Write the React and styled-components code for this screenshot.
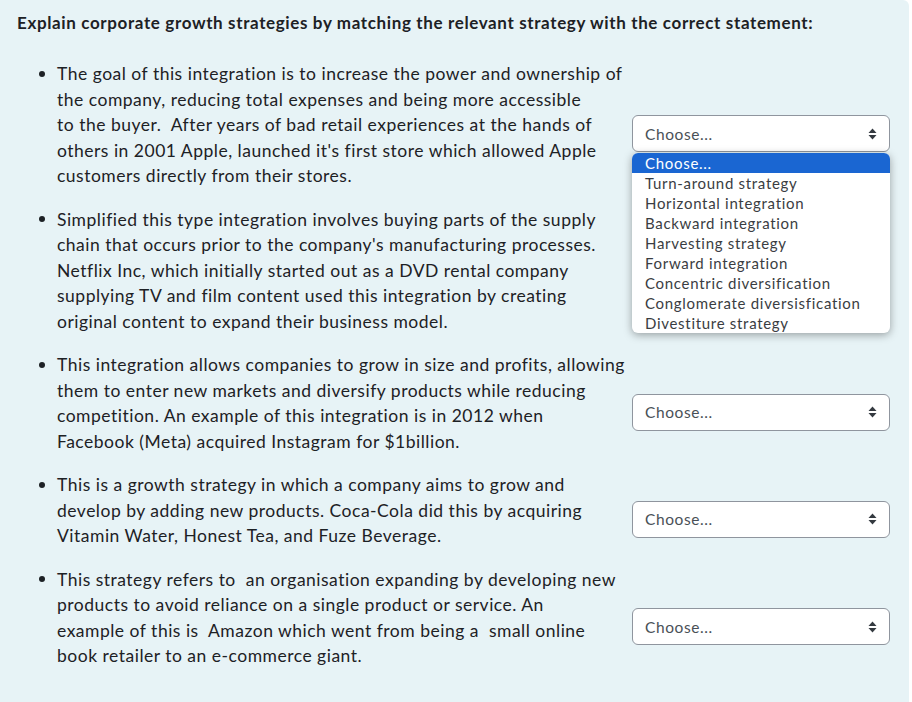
import React from "react"
import styled, { createGlobalStyle } from "styled-components"

const GlobalStyle = createGlobalStyle`
    html, body {
        margin: 0;
        padding: 0;
        background: #ffffff;
    }
    body {
        font-family: "Century Gothic", "Lato", sans-serif;
        color: #1d2125;
    }
`

const Panel = styled.div`
    width: 909px;
    min-height: 702px;
    box-sizing: border-box;
    background: #e7f3f6;
    border-radius: 0 6px 0 0;
    padding: 12px 0 0 17px;
`
const Title = styled.h4`
    margin: 0 0 27px;
    font-size: 17px;
    font-weight: 700;
    line-height: 22px;
    letter-spacing: 0.63px;
    color: #1d2125;
    white-space: nowrap;
`
const List = styled.ul`
    list-style: none;
    margin: 0;
    padding: 0;
`
const Item = styled.li`
    display: flex;
    align-items: center;
`
const Bullet = styled.span`
    align-self: flex-start;
    flex: 0 0 40px;
    height: 25.5px;
    display: flex;
    align-items: center;
    justify-content: flex-end;
    &::after {
        content: "";
        width: 6px;
        height: 6px;
        border-radius: 50%;
        background: #1d2125;
        margin-right: 12px;
    }
`
const Statement = styled.div`
    flex: 0 0 575px;
    padding-bottom: 18px;
    font-size: 17.5px;
    line-height: 25.5px;
    letter-spacing: 0.5px;
    white-space: pre;
`
const SelectWrap = styled.div`
    position: relative;
    width: 258px;
`
const Select = styled.div`
    height: 37px;
    box-sizing: border-box;
    display: flex;
    align-items: center;
    justify-content: space-between;
    padding: 0 12px;
    background: #ffffff;
    border: 1px solid #8f959e;
    border-radius: 6px;
    font-size: 15.5px;
    color: #495057;
    letter-spacing: 0.6px;
`
const Menu = styled.ul`
    position: absolute;
    top: 38px;
    left: 0;
    width: 258px;
    margin: 0;
    padding: 0;
    list-style: none;
    background: #ffffff;
    border-radius: 6px;
    overflow: hidden;
    box-shadow: 0 2px 8px rgba(0, 0, 0, 0.35);
    z-index: 2;
`
const Option = styled.li`
    height: 20px;
    line-height: 20px;
    padding: 0 13px;
    font-size: 15px;
    letter-spacing: 0.7px;
    white-space: nowrap;
    color: ${p => (p.$active ? "#ffffff" : "#3a3d42")};
    background: ${p => (p.$active ? "#1a66d2" : "transparent")};
`

const options = [
    "Choose...",
    "Turn-around strategy",
    "Horizontal integration",
    "Backward integration",
    "Harvesting strategy",
    "Forward integration",
    "Concentric diversification",
    "Conglomerate diversisfication",
    "Divestiture strategy",
]

const statements = [
    [
        "The goal of this integration is to increase the power and ownership of",
        "the company, reducing total expenses and being more accessible",
        "to the buyer.  After years of bad retail experiences at the hands of",
        "others in 2001 Apple, launched it's first store which allowed Apple",
        "customers directly from their stores.",
    ],
    [
        "Simplified this type integration involves buying parts of the supply",
        "chain that occurs prior to the company's manufacturing processes.",
        "Netflix Inc, which initially started out as a DVD rental company",
        "supplying TV and film content used this integration by creating",
        "original content to expand their business model.",
    ],
    [
        "This integration allows companies to grow in size and profits, allowing",
        "them to enter new markets and diversify products while reducing",
        "competition. An example of this integration is in 2012 when",
        "Facebook (Meta) acquired Instagram for $1billion.",
    ],
    [
        "This is a growth strategy in which a company aims to grow and",
        "develop by adding new products. Coca-Cola did this by acquiring",
        "Vitamin Water, Honest Tea, and Fuze Beverage.",
    ],
    [
        "This strategy refers to  an organisation expanding by developing new",
        "products to avoid reliance on a single product or service. An",
        "example of this is  Amazon which went from being a  small online",
        "book retailer to an e-commerce giant.",
    ],
]

const Arrows = () => (
    <svg width="9" height="12" viewBox="0 0 9 12">
        <path d="M4.5 0.5 L8.5 5 L0.5 5 Z" fill="#343a40" />
        <path d="M4.5 11.5 L8.5 7 L0.5 7 Z" fill="#343a40" />
    </svg>
)

export default function App() {
    return (
        <React.Fragment>
            <GlobalStyle />
            <Panel>
                <Title>Explain corporate growth strategies by matching the relevant strategy with the correct statement:</Title>
                <List>
                    {statements.map((lines, i) => (
                        <Item key={i}>
                            <Bullet />
                            <Statement>{lines.join("\n")}</Statement>
                            <SelectWrap>
                                <Select>
                                    <span>Choose...</span>
                                    <Arrows />
                                </Select>
                                {i === 0 && (
                                    <Menu>
                                        {options.map((o, j) => (
                                            <Option key={j} $active={j === 0}>{o}</Option>
                                        ))}
                                    </Menu>
                                )}
                            </SelectWrap>
                        </Item>
                    ))}
                </List>
            </Panel>
        </React.Fragment>
    )
}
